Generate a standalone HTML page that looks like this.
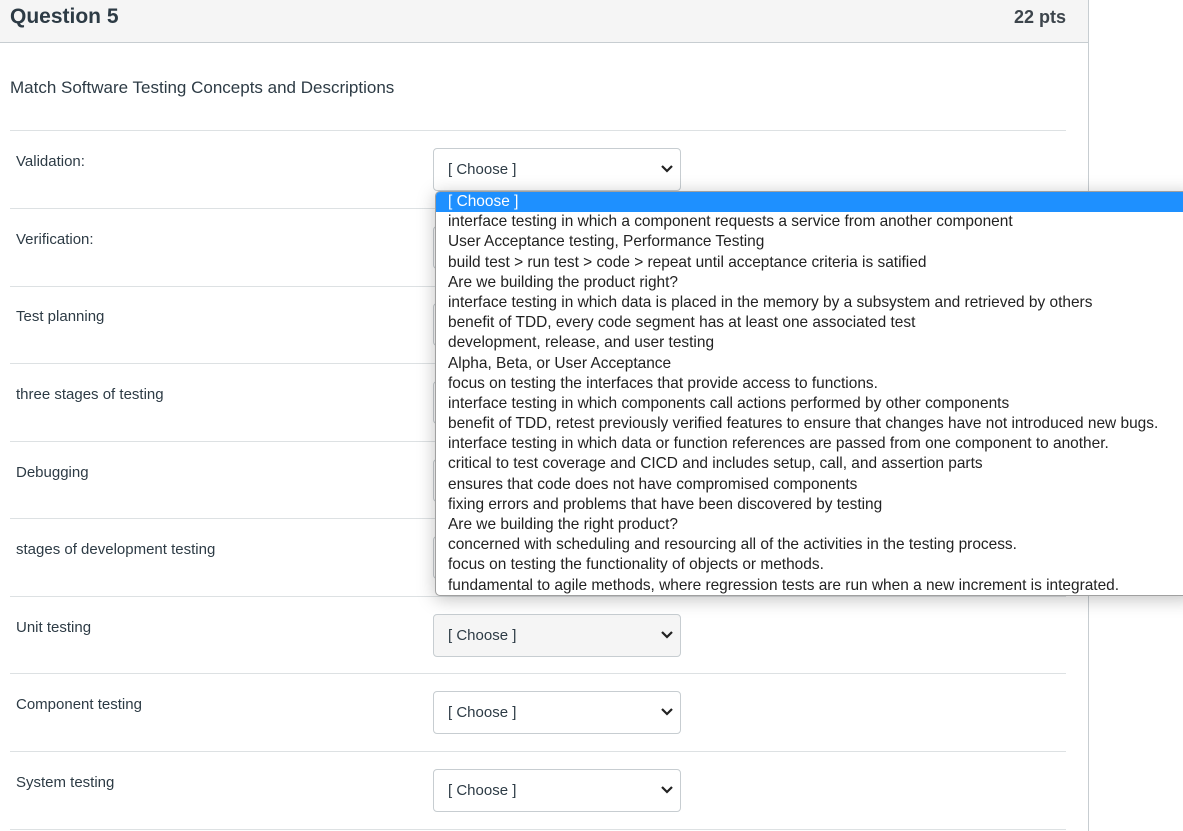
<!DOCTYPE html>
<html><head><meta charset="utf-8"><style>
*{margin:0;padding:0;box-sizing:border-box}
body{width:1183px;height:831px;overflow:hidden;background:#fff;font-family:"Liberation Sans",sans-serif;color:#2d3b45;position:relative}
.hdr{position:absolute;left:0;top:0;width:1089px;height:43px;background:#f5f5f5;border-bottom:1px solid #c7cdd1;border-right:1px solid #c7cdd1}
.hdr .t{position:absolute;left:10px;top:5px;font-size:21px;font-weight:bold;color:#2d3b45}
.hdr .p{position:absolute;right:22px;top:7px;font-size:18px;font-weight:bold;color:#3d454c}
.vline{position:absolute;left:1088px;top:43px;width:1px;height:788px;background:#c7cdd1}
.q{position:absolute;left:10px;top:78px;font-size:17px;color:#2d3b45}
.sep{position:absolute;left:10px;width:1056px;height:1px;background:#dde1e3}
.lab{position:absolute;left:16px;font-size:15px;color:#2d3b45}
.sel{position:absolute;left:433px;width:248px;height:43px;border:1px solid #c7cdd1;border-radius:4px;background:#fff}
.sel span{position:absolute;left:14px;top:12px;font-size:15px;color:#2d3b45}
.sel svg{position:absolute;right:6px;top:15px}
.dd{position:absolute;left:435px;top:191px;width:760px;height:405px;background:#fff;border:1px solid #a0a0a0;border-radius:5px;box-shadow:0 3px 18px rgba(0,0,0,.25);overflow:hidden}
.dd div{height:20.2px;line-height:20px;padding-left:12px;font-size:15.45px;color:#222;white-space:nowrap}
.dd .hi{background:#1e90ff;color:#fff}
</style></head><body>
<div class="hdr"><div class="t">Question 5</div><div class="p">22 pts</div></div>
<div class="vline"></div>
<div class="q">Match Software Testing Concepts and Descriptions</div>

<div class="sep" style="top:130px"></div>
<div class="sep" style="top:208px"></div>
<div class="sep" style="top:286px"></div>
<div class="sep" style="top:363px"></div>
<div class="sep" style="top:441px"></div>
<div class="sep" style="top:518px"></div>
<div class="sep" style="top:596px"></div>
<div class="sep" style="top:673px"></div>
<div class="sep" style="top:751px"></div>
<div class="sep" style="top:829px"></div>

<div class="lab" style="top:153px">Validation:</div>
<div class="lab" style="top:231px">Verification:</div>
<div class="lab" style="top:308px">Test planning</div>
<div class="lab" style="top:386px">three stages of testing</div>
<div class="lab" style="top:464px">Debugging</div>
<div class="lab" style="top:541px">stages of development testing</div>
<div class="lab" style="top:619px">Unit testing</div>
<div class="lab" style="top:696px">Component testing</div>
<div class="lab" style="top:774px">System testing</div>

<div class="sel" style="top:148px"><span>[ Choose ]</span><svg width="14" height="10" viewBox="0 0 14 10"><path d="M2 2l5 5 5-5" stroke="#222" stroke-width="2.2" fill="none"/></svg></div>
<div class="sel" style="top:226px"></div>
<div class="sel" style="top:303px"></div>
<div class="sel" style="top:381px"></div>
<div class="sel" style="top:459px"></div>
<div class="sel" style="top:536px"></div>
<div class="sel" style="top:614px;background:#f5f5f5"><span>[ Choose ]</span><svg width="14" height="10" viewBox="0 0 14 10"><path d="M2 2l5 5 5-5" stroke="#222" stroke-width="2.2" fill="none"/></svg></div>
<div class="sel" style="top:691px"><span>[ Choose ]</span><svg width="14" height="10" viewBox="0 0 14 10"><path d="M2 2l5 5 5-5" stroke="#222" stroke-width="2.2" fill="none"/></svg></div>
<div class="sel" style="top:769px"><span>[ Choose ]</span><svg width="14" height="10" viewBox="0 0 14 10"><path d="M2 2l5 5 5-5" stroke="#222" stroke-width="2.2" fill="none"/></svg></div>

<div class="dd">
<div class="hi">[ Choose ]</div>
<div>interface testing in which a component requests a service from another component</div>
<div>User Acceptance testing, Performance Testing</div>
<div>build test &gt; run test &gt; code &gt; repeat until acceptance criteria is satified</div>
<div>Are we building the product right?</div>
<div>interface testing in which data is placed in the memory by a subsystem and retrieved by others</div>
<div>benefit of TDD, every code segment has at least one associated test</div>
<div>development, release, and user testing</div>
<div>Alpha, Beta, or User Acceptance</div>
<div>focus on testing the interfaces that provide access to functions.</div>
<div>interface testing in which components call actions performed by other components</div>
<div>benefit of TDD, retest previously verified features to ensure that changes have not introduced new bugs.</div>
<div>interface testing in which data or function references are passed from one component to another.</div>
<div>critical to test coverage and CICD and includes setup, call, and assertion parts</div>
<div>ensures that code does not have compromised components</div>
<div>fixing errors and problems that have been discovered by testing</div>
<div>Are we building the right product?</div>
<div>concerned with scheduling and resourcing all of the activities in the testing process.</div>
<div>focus on testing the functionality of objects or methods.</div>
<div>fundamental to agile methods, where regression tests are run when a new increment is integrated.</div>
</div>
</body></html>
